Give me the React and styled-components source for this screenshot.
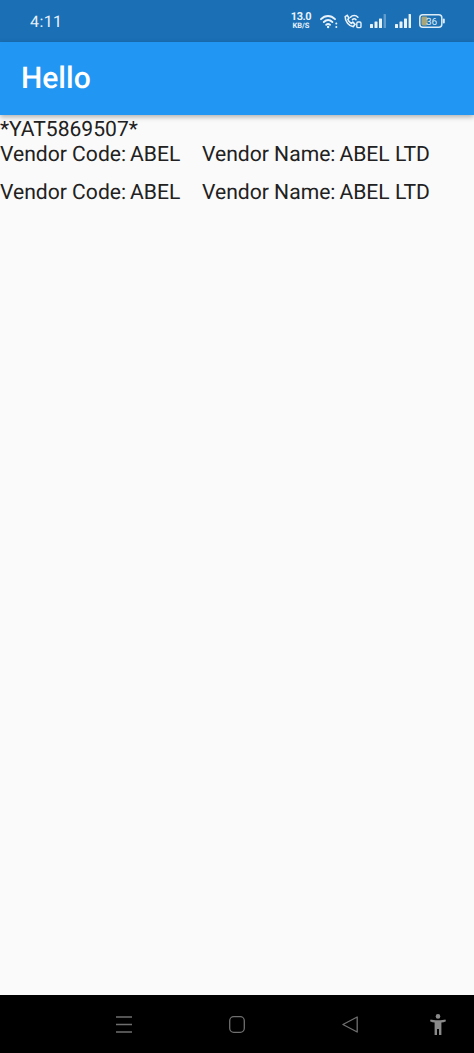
import React from "react";
import styled, { createGlobalStyle } from "styled-components";

const GlobalStyle = createGlobalStyle`
    html, body {
        margin: 0;
        padding: 0;
        height: 100%;
        background: #fafafa;
    }
    #root {
        height: 100%;
    }
`;

const Screen = styled.div`
    width: 474px;
    height: 1053px;
    display: flex;
    flex-direction: column;
    overflow: hidden;
    font-family: Roboto, "Liberation Sans", sans-serif;
    text-rendering: geometricPrecision;
    background: #fafafa;
`;

const StatusBar = styled.div`
    height: 42px;
    flex-shrink: 0;
    display: flex;
    align-items: center;
    justify-content: space-between;
    padding: 0 29px 0 30px;
    background: #1a6fb5;
    color: #e8f2fa;
`;

const Clock = styled.span`
    font-size: 16px;
    letter-spacing: 0.4px;
`;

const StatusIcons = styled.div`
    display: flex;
    align-items: center;
    gap: 8px;
`;

const Speed = styled.div`
    width: 20px;
    display: flex;
    flex-direction: column;
    align-items: center;
    font-weight: 700;
    margin-right: 1px;
`;

const SpeedValue = styled.span`
    font-size: 11px;
    line-height: 10px;
    letter-spacing: -0.4px;
`;

const SpeedUnit = styled.span`
    font-size: 7.5px;
    line-height: 8px;
`;

const AppBar = styled.header`
    height: 73px;
    flex-shrink: 0;
    display: flex;
    align-items: center;
    padding-left: 21px;
    box-sizing: border-box;
    background: #2196f3;
    color: #fff;
    font-size: 30px;
    font-weight: 500;
    box-shadow: 0 2px 5px rgba(0, 0, 0, 0.3);
    position: relative;
`;

const Content = styled.main`
    flex: 1;
    color: #212121;
    font-size: 21.1px;
`;

const Barcode = styled.div`
    line-height: 23px;
    margin-top: 3px;
`;

const VendorRow = styled.div`
    height: 38px;
    display: flex;
    align-items: flex-start;
    line-height: 28px;
`;

const Field = styled.div`
    width: ${(props) => props.width}px;
    display: flex;
    gap: 4px;
    white-space: nowrap;
`;

const NavBar = styled.nav`
    height: 58px;
    flex-shrink: 0;
    display: grid;
    grid-template-columns: 132px 113px 113px 88px;
    justify-content: start;
    align-items: center;
    background: #000;
    color: #6f6f6f;
`;

const NavSlot = styled.div`
    display: flex;
    justify-content: flex-end;
`;

const WifiGlyph = styled.svg`
    margin-right: -2px;
`;

const WifiIcon = () => (
    <WifiGlyph width="18" height="15" viewBox="0 0 18 15" fill="none" stroke="currentColor" strokeWidth="1.9" strokeLinecap="round">
        <path d="M1 5.2C5.2 1 10.8 1 15 5.2" />
        <path d="M3.8 8C6.6 5.4 9.6 5.4 12.4 8" />
        <path d="M6.2 10.8C7.4 9.7 8.8 9.7 10 10.8" />
        <circle cx="8.1" cy="13" r="1.2" fill="currentColor" stroke="none" />
        <circle cx="16.3" cy="9.5" r="1" fill="currentColor" stroke="none" />
        <circle cx="16.3" cy="13" r="1" fill="currentColor" stroke="none" />
    </WifiGlyph>
);

const CallIcon = () => (
    <svg width="18" height="15" viewBox="0 0 18 15" fill="none" stroke="currentColor" strokeWidth="1.6" strokeLinecap="round">
        <path d="M1.2 2.6L3.2 1.4L5 4L3.9 5.4C4.5 7.2 5.7 8.6 7.5 9.4L8.9 8.2L11 10.4L9.3 12.6C5 12.4 1 7.2 1.2 2.6Z" />
        <path d="M6.5 3.2C8.5 1 11.9 1 13.9 3.2" />
        <path d="M8.5 5.6C9.5 4.6 10.9 4.6 11.9 5.6" />
        <rect x="12.8" y="8" width="4.2" height="5.6" rx="1.2" strokeWidth="1.4" />
    </svg>
);

const SignalIcon = ({ width, full }) => (
    <svg width={width} height="14" viewBox={`0 0 ${width} 14`} fill="currentColor">
        <rect x={width - 16} y="10" width="3" height="4" rx="0.6" />
        <rect x={width - 11.5} y="7.5" width="3" height="6.5" rx="0.6" />
        <rect x={width - 7} y="4.5" width="3" height="9.5" rx="0.6" />
        <rect x={width - 2.4} y="0" width="2.4" height="14" rx="0.6" opacity={full ? 1 : 0.35} />
    </svg>
);

const BatteryIcon = () => (
    <svg width="26" height="14" viewBox="0 0 26 14">
        <rect x="0.8" y="0.8" width="22" height="12.4" rx="3" fill="none" stroke="#dcebf6" strokeWidth="1.5" />
        <rect x="2.5" y="2.5" width="6" height="9" rx="1.4" fill="#a9a77a" />
        <rect x="23.8" y="4.5" width="2" height="5" rx="1" fill="#dcebf6" />
        <text x="12.5" y="10.6" fontSize="10" textAnchor="middle" fill="#dcebf6" fontFamily="Roboto, sans-serif">36</text>
    </svg>
);

const MenuIcon = () => (
    <svg width="16" height="17" viewBox="0 0 16 17" stroke="currentColor" strokeWidth="1.3">
        <path d="M0 1H16M0 8.5H16M0 16H16" />
    </svg>
);

const HomeIcon = () => (
    <svg width="16" height="17" viewBox="0 0 16 17" fill="none" stroke="currentColor" strokeWidth="1.3">
        <rect x="0.7" y="0.7" width="14.6" height="15.6" rx="4" />
    </svg>
);

const BackIcon = () => (
    <svg width="16" height="17" viewBox="0 0 16 17" fill="none" stroke="currentColor" strokeWidth="1.3" strokeLinejoin="round">
        <path d="M15.2 1V16L0.9 8.5Z" />
    </svg>
);

const AccessibilityIcon = () => (
    <svg width="16" height="21" viewBox="0 0 16 21" fill="#8a8a8a">
        <circle cx="8" cy="2.4" r="2.3" />
        <path d="M0.6 5.6C3 6.6 13 6.6 15.4 5.6L16 7.2C14.4 8 12.8 8.4 11.4 8.6V21H9V15H7V21H4.6V8.6C3.2 8.4 1.6 8 0 7.2Z" />
    </svg>
);

const vendors = [
    { code: "ABEL", name: "ABEL LTD" },
    { code: "ABEL", name: "ABEL LTD" },
];

export default function App() {
    return (
        <Screen>
            <GlobalStyle />
            <StatusBar>
                <Clock>4:11</Clock>
                <StatusIcons>
                    <Speed>
                        <SpeedValue>13.0</SpeedValue>
                        <SpeedUnit>KB/S</SpeedUnit>
                    </Speed>
                    <WifiIcon />
                    <CallIcon />
                    <SignalIcon width={16} />
                    <SignalIcon width={17} full />
                    <BatteryIcon />
                </StatusIcons>
            </StatusBar>
            <AppBar>Hello</AppBar>
            <Content>
                <Barcode>*YAT5869507*</Barcode>
                {vendors.map((vendor, index) => (
                    <VendorRow key={index}>
                        <Field width={202}>
                            <span>Vendor Code:</span>
                            <span>{vendor.code}</span>
                        </Field>
                        <Field width={272}>
                            <span>Vendor Name:</span>
                            <span>{vendor.name}</span>
                        </Field>
                    </VendorRow>
                ))}
            </Content>
            <NavBar>
                <NavSlot><MenuIcon /></NavSlot>
                <NavSlot><HomeIcon /></NavSlot>
                <NavSlot><BackIcon /></NavSlot>
                <NavSlot><AccessibilityIcon /></NavSlot>
            </NavBar>
        </Screen>
    );
}
